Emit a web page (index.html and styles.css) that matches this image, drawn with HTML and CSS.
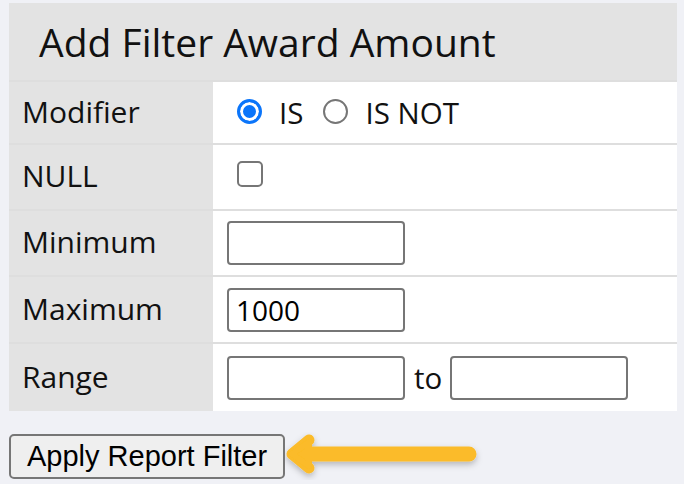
FILE: index.html
```html
<!DOCTYPE html>
<html>
<head>
<meta charset="utf-8">
<link rel="stylesheet" href="styles.css">
</head>
<body>
<div class="panel">
  <div class="header"><h1 class="title">Add Filter Award Amount</h1></div>
  <div class="row row-mod">
    <div class="label">Modifier</div>
    <div class="field">
      <label class="opt"><input type="radio" name="mod" class="radio" checked><span>IS</span></label>
      <label class="opt opt2"><input type="radio" name="mod" class="radio"><span>IS NOT</span></label>
    </div>
  </div>
  <div class="row">
    <div class="label">NULL</div>
    <div class="field"><input type="checkbox" class="check"></div>
  </div>
  <div class="row">
    <div class="label">Minimum</div>
    <div class="field"><input type="text" class="text"></div>
  </div>
  <div class="row row-max">
    <div class="label">Maximum</div>
    <div class="field"><input type="text" class="text" value="1000"></div>
  </div>
  <div class="row row-range">
    <div class="label">Range</div>
    <div class="field"><input type="text" class="text"><span class="to">to</span><input type="text" class="text"></div>
  </div>
</div>
<div class="actions">
  <button class="apply" type="button">Apply Report Filter</button>
  <svg class="arrow" width="200" height="48" viewBox="0 0 200 48">
    <defs>
      <filter id="sh" x="-10%" y="-30%" width="120%" height="180%">
        <feDropShadow dx="0" dy="3" stdDeviation="3" flood-color="#000" flood-opacity="0.25"/>
      </filter>
    </defs>
    <g filter="url(#sh)" stroke="#fbbb29" fill="none" stroke-linecap="round" stroke-linejoin="round">
      <line x1="12" y1="22" x2="184" y2="22" stroke-width="15"/>
      <polyline points="24,8 7,22 24,36" stroke-width="11"/>
      <polygon points="7,22 24,10 24,34" fill="#fbbb29" stroke-width="6"/>
    </g>
  </svg>
</div>
</body>
</html>
```

FILE: styles.css
```css
html, body {
  margin: 0;
  padding: 0;
  background: #f0f1f6;
}
body {
  padding: 3px 7px 0 9px;
  font-family: "Open Sans", "DejaVu Sans", sans-serif;
  color: #111;
}
.panel {
  width: 668px;
  background: #ffffff;
}
.header {
  background: #e3e3e3;
  height: 77px;
  box-sizing: border-box;
  padding: 12px 0 0 30px;
}
.title {
  margin: 0;
  font-size: 39px;
  font-weight: 400;
  line-height: 53px;
  color: #111;
}
.row {
  display: grid;
  grid-template-columns: 204px 1fr;
  column-gap: 1px;
  border-top: 2px solid #dedede;
  height: 64px;
}
.row-mod { height: 61px; }
.row-max { height: 65px; }
.row-range { height: 67px; }
.label {
  background: #e3e3e3;
  display: flex;
  align-items: center;
  padding: 0 0 2px 13px;
  font-size: 30px;
  line-height: 40px;
}
.field {
  display: flex;
  align-items: center;
  padding-left: 13px;
  font-size: 29.5px;
  line-height: 40px;
}
.opt {
  display: flex;
  align-items: center;
  margin-left: 10px;
}
.opt2 { margin-left: 20px; }
.opt span { margin-left: 17px; }
.radio {
  appearance: none;
  -webkit-appearance: none;
  margin: 0 0 2px 0;
  width: 25px;
  height: 25px;
  box-sizing: border-box;
  border-radius: 50%;
  border: 2px solid #767676;
  background: #fff;
}
.radio:checked {
  border: 3px solid #0b75fa;
  background: #0b75fa;
  box-shadow: inset 0 0 0 3px #fff;
}
.check {
  appearance: none;
  -webkit-appearance: none;
  margin: 0 0 6px 10px;
  width: 26px;
  height: 26px;
  box-sizing: border-box;
  border: 2px solid #767676;
  border-radius: 5px;
  background: #fff;
}
.text {
  width: 178px;
  height: 44px;
  box-sizing: border-box;
  margin: 0;
  border: 2px solid #767676;
  border-radius: 4px;
  padding: 0 7px;
  font-family: "Open Sans", "DejaVu Sans", sans-serif;
  font-size: 28px;
  color: #000;
  background: #fff;
}
.to {
  margin: 0 8px 0 9px;
}
.actions {
  display: flex;
  align-items: center;
  margin-top: 21px;
}
.apply {
  height: 45px;
  box-sizing: border-box;
  margin: 0;
  padding: 0 16px 0 16px;
  border: 2px solid #767676;
  border-radius: 5px;
  background: #efefef;
  font-family: "Liberation Sans", Arial, sans-serif;
  font-size: 29px;
  color: #000;
  line-height: 40px;
}
.arrow {
  display: block;
  margin-left: 0;
}
```
